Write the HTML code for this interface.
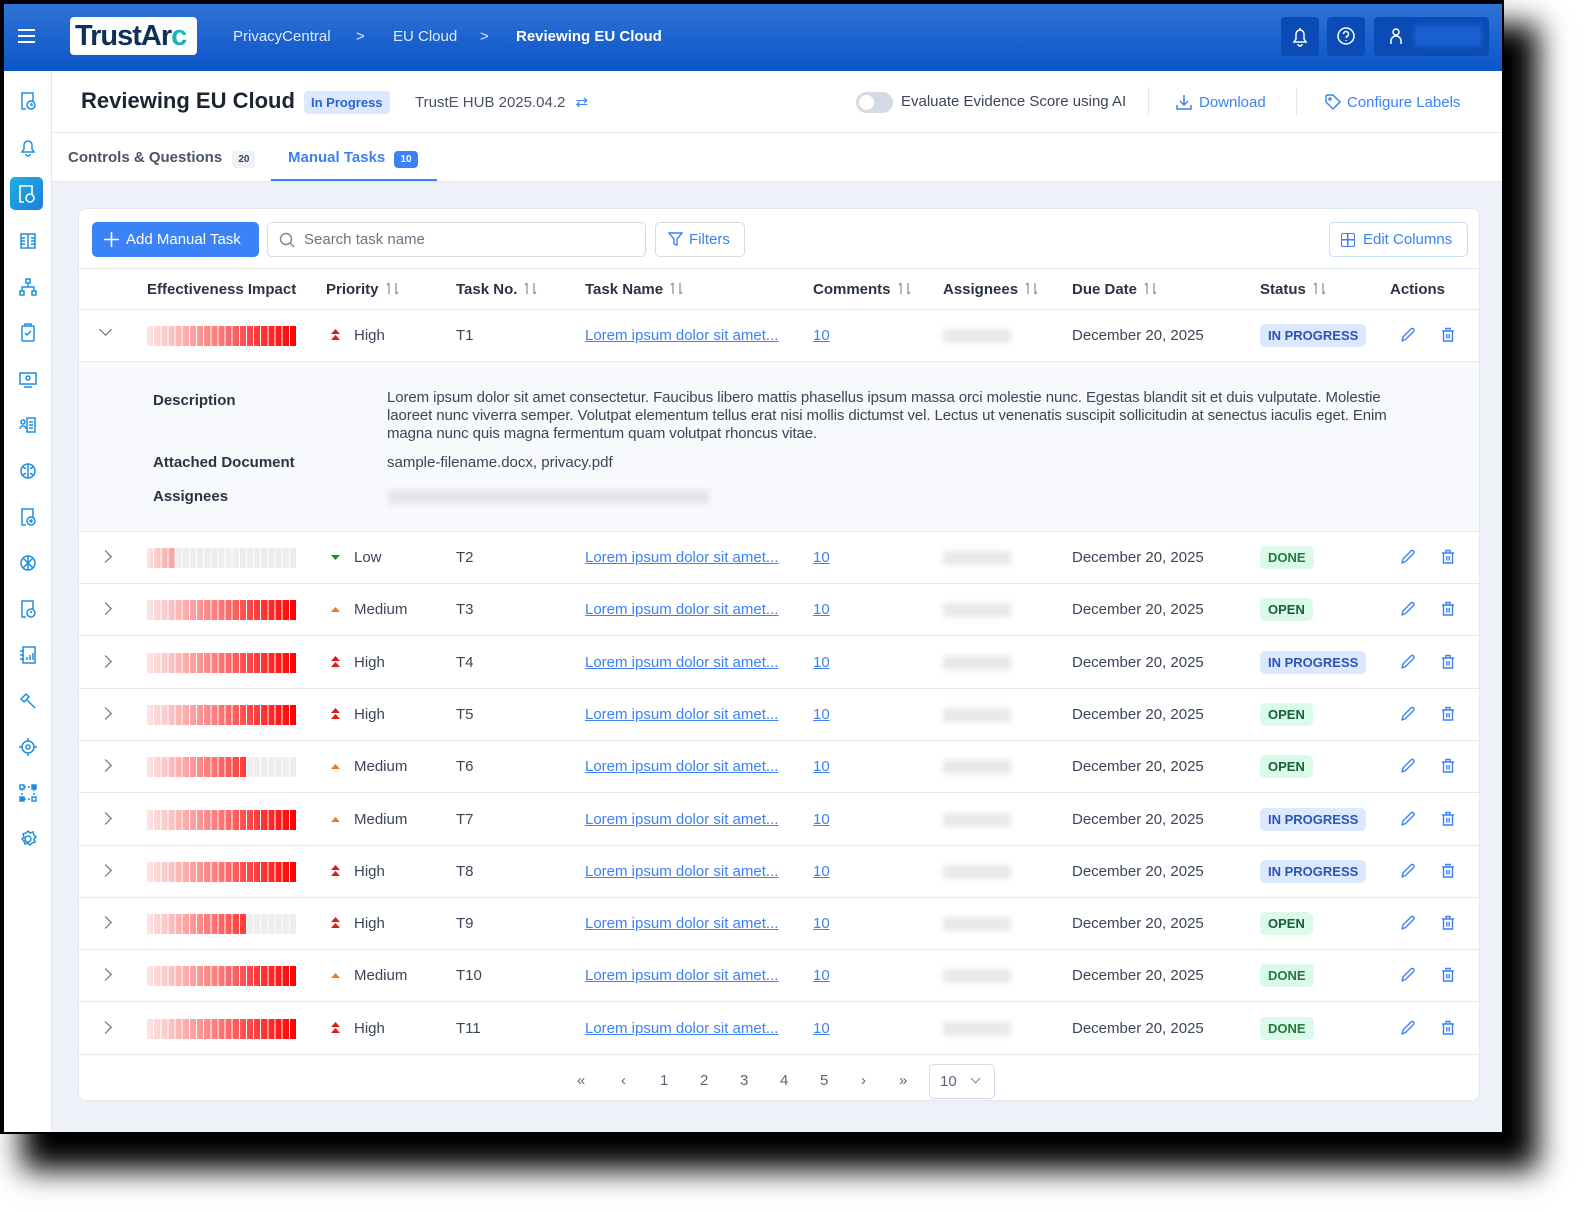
<!DOCTYPE html>
<html><head><meta charset="utf-8"><style>
*{box-sizing:border-box;margin:0;padding:0}
body{width:1588px;height:1212px;background:#fff;font-family:"Liberation Sans",sans-serif;position:relative;overflow:hidden;color:#3b4559}
.blk{position:absolute;left:0;top:0;width:1504px;height:1134px;background:#000;box-shadow:28px 30px 28px 6px #000}
.fr{position:absolute;left:4px;top:4px;width:1498px;height:1128px;background:#eef2f8;overflow:hidden}
.hdr{position:absolute;left:0;top:0;width:1498px;height:67px;background:linear-gradient(180deg,#2f73d6,#0c55c8)}
.hdr .t{position:absolute;color:#dfe9fb;font-size:15px;top:24px}
.logo{position:absolute;left:66px;top:13px;width:127px;height:38px;background:#fff;border-radius:4px;font-size:29px;font-weight:bold;color:#0e3157;line-height:38px;padding-left:5px;letter-spacing:-1px}
.hb{position:absolute;top:13px;height:39px;background:#0a4bb5;border-radius:4px}
.side{position:absolute;left:0;top:67px;width:48px;height:1061px;background:#fff;border-right:1px solid #e3e8ef}
.side>svg{position:absolute;left:14px}
.title{position:absolute;left:48px;top:67px;width:1450px;height:62px;background:#fff;border-bottom:1px solid #e3e8ef}
.tabs{position:absolute;left:48px;top:129px;width:1450px;height:49px;background:#fff;border-bottom:1px solid #e3e8ef}
.card{position:absolute;left:74px;top:204px;width:1402px;height:893px;background:#fff;border-radius:8px;border:1px solid #e3e8ef}
.row{position:absolute;left:0;width:1400px;height:52px;border-bottom:1px solid #e6ebf2;font-size:15px}
.row>*{position:absolute;top:17px}
.bar{left:68px!important;top:16px!important;width:150px;height:20px}
.full{background:repeating-linear-gradient(90deg,transparent 0 6.14px,#fff 6.14px 7.14px),linear-gradient(90deg,#fde6e6,#ff0000)}
.part{background:repeating-linear-gradient(90deg,transparent 0 6.14px,#fff 6.14px 7.14px),linear-gradient(90deg,#fde6e6,#ff3838 100px,#eeeeee 100px)}
.low{background:repeating-linear-gradient(90deg,transparent 0 6.14px,#fff 6.14px 7.14px),linear-gradient(90deg,#fde6e6,#f89c9c 28.5px,#eeeeee 28.5px)}
.chev{left:22px;top:20px!important;width:9px;height:9px;border-right:1.6px solid #5a6577;border-bottom:1.6px solid #5a6577;transform:rotate(-45deg)}
.pi{left:251px;top:18px!important}
.pt{left:275px}.tn{left:377px}
.nm{left:506px;color:#3b82f6;text-decoration:underline}
.cm{left:734px;color:#3b82f6;text-decoration:underline}
.as{left:864px;top:19px!important;width:68px;height:14px;background:#e8e8e8;filter:blur(3px)}
.dd{left:993px}
.st{left:1181px;top:14px!important;font-size:13px;font-weight:bold;padding:4px 8px;border-radius:5px}
.ip{background:#dbe8fd;color:#2d55b8}.op{background:#dcfaea;color:#16603a}.dn{background:#dcfaea;color:#237a3c}
.ed{left:1320px;top:16px!important}.tr{left:1361px;top:16px!important}
.th{position:absolute;top:72px;font-size:15px;font-weight:bold;color:#2a3344}
.th svg{vertical-align:-2px;margin-left:7px}
</style></head><body>
<svg width="0" height="0" style="position:absolute"><defs>
<g id="hi"><path d="M1 6L5.5 1 10 6zM1 12L5.5 7 10 12z" fill="#e01919"/></g>
<g id="md"><path d="M1 10L5.5 5 10 10z" fill="#f07a1a"/></g>
<g id="lo"><path d="M1 5L5.5 10 10 5z" fill="#2a8a2a"/></g>
<g id="pen"><path d="M3 15l1-4 8-8a1.5 1.5 0 0 1 2.5 2.5l-8 8z" fill="none" stroke="#3b82f6" stroke-width="1.4" stroke-linejoin="round"/></g>
<g id="bin"><path d="M2 5h12M6 5V2.5h4V5M3.5 5v10h9V5M6.8 8v4.5M9.2 8v4.5" fill="none" stroke="#3b82f6" stroke-width="1.4"/></g>
<g id="srt"><path d="M3 13V2M1 4l2-2M10 2v11M12 11l-2 2" fill="none" stroke="#8a95a8" stroke-width="1.3"/></g>
</defs></svg>
<div class="blk"></div>
<div class="fr">
<div class="hdr">
<div style="position:absolute;left:14px;top:25px;width:17px;height:2px;background:#fff;box-shadow:0 6px 0 #fff,0 12px 0 #fff"></div>
<div class="logo">TrustAr<span style="color:#1ab3b8">c</span></div>
<div class="t" style="left:229px">PrivacyCentral</div>
<div class="t" style="left:352px">&gt;</div>
<div class="t" style="left:389px">EU Cloud</div>
<div class="t" style="left:476px">&gt;</div>
<div class="t" style="left:512px;color:#fff;font-weight:bold">Reviewing EU Cloud</div>
<div class="hb" style="left:1277px;width:38px"><svg width="38" height="39" viewBox="0 0 38 39"><path d="M13 25h12l-2-3v-5a4 4 0 0 0-8 0v5zM17 27a2 2 0 0 0 4 0M19 11v2" fill="none" stroke="#fff" stroke-width="1.5"/></svg></div>
<div class="hb" style="left:1323px;width:38px"><svg width="38" height="39" viewBox="0 0 38 39"><circle cx="19" cy="19" r="8" fill="none" stroke="#fff" stroke-width="1.5"/><path d="M16.5 17a2.5 2.5 0 1 1 3 2.5v1.5M19 23v1" fill="none" stroke="#fff" stroke-width="1.5"/></svg></div>
<div class="hb" style="left:1370px;width:115px"><svg width="38" height="39" viewBox="0 0 38 39"><circle cx="22" cy="15" r="3" fill="none" stroke="#fff" stroke-width="1.5"/><path d="M17 27v-3a5 5 0 0 1 10 0v3" fill="none" stroke="#fff" stroke-width="1.5"/></svg><div style="position:absolute;left:40px;top:8px;width:68px;height:22px;background:#1a5fd0;filter:blur(2px)"></div></div>
</div>
<div class="side">
<svg style="top:20px" width="20" height="20" viewBox="0 0 20 20" fill="none" stroke="#1e8fe0" stroke-width="1.5"><path d="M8 18H4V2h11v8"/><circle cx="13" cy="14" r="4"/><path d="M13 12v2h2"/></svg>
<svg style="top:66px" width="20" height="20" viewBox="0 0 20 20" fill="none" stroke="#1e8fe0" stroke-width="1.5"><path d="M4 15h12l-2-3V8a4 4 0 0 0-8 0v4zM8 17a2 2 0 0 0 4 0"/></svg>
<div style="position:absolute;left:6px;top:106px;width:33px;height:33px;border-radius:5px;background:linear-gradient(135deg,#1fb0e0,#1a7ee0)"><svg style="position:absolute;left:0;top:0" width="33" height="33" viewBox="0 0 33 33" fill="none" stroke="#fff" stroke-width="1.6"><path d="M14 25h-4V9h12v8"/><circle cx="20" cy="21" r="4"/></svg></div>
<svg style="top:160px" width="20" height="20" viewBox="0 0 20 20" fill="none" stroke="#1e8fe0" stroke-width="1.5"><rect x="3" y="3" width="14" height="14"/><path d="M10 3v14M3 7h4M3 10h4M3 13h4M13 7h4M13 10h4M13 13h4"/></svg>
<svg style="top:206px" width="20" height="20" viewBox="0 0 20 20" fill="none" stroke="#1e8fe0" stroke-width="1.5"><rect x="8" y="2" width="4" height="4"/><rect x="2" y="14" width="4" height="4"/><rect x="14" y="14" width="4" height="4"/><path d="M10 6v4M4 14v-4h12v4"/></svg>
<svg style="top:252px" width="20" height="20" viewBox="0 0 20 20" fill="none" stroke="#1e8fe0" stroke-width="1.5"><rect x="4" y="3" width="12" height="15" rx="1"/><path d="M7 3V1h6v2M7 10l2 2 4-4"/></svg>
<svg style="top:298px" width="20" height="20" viewBox="0 0 20 20" fill="none" stroke="#1e8fe0" stroke-width="1.5"><rect x="2" y="4" width="16" height="11"/><path d="M6 18h8"/><circle cx="10" cy="9" r="2"/></svg>
<svg style="top:344px" width="20" height="20" viewBox="0 0 20 20" fill="none" stroke="#1e8fe0" stroke-width="1.5"><rect x="9" y="3" width="8" height="14"/><path d="M11 7h4M11 10h4M11 13h4"/><circle cx="5" cy="7" r="2"/><path d="M2 14a3 3 0 0 1 6 0"/></svg>
<svg style="top:390px" width="20" height="20" viewBox="0 0 20 20" fill="none" stroke="#1e8fe0" stroke-width="1.5"><circle cx="10" cy="10" r="7"/><path d="M10 3v14M5 6l3 2M15 6l-3 2M5 14l3-2M15 14l-3-2"/></svg>
<svg style="top:436px" width="20" height="20" viewBox="0 0 20 20" fill="none" stroke="#1e8fe0" stroke-width="1.5"><path d="M8 18H4V2h11v8"/><circle cx="13" cy="14" r="4"/><circle cx="13" cy="14" r="1"/></svg>
<svg style="top:482px" width="20" height="20" viewBox="0 0 20 20" fill="none" stroke="#1e8fe0" stroke-width="1.5"><circle cx="10" cy="10" r="7"/><path d="M5 5l10 10M15 5L5 15M10 3v14"/></svg>
<svg style="top:528px" width="20" height="20" viewBox="0 0 20 20" fill="none" stroke="#1e8fe0" stroke-width="1.5"><path d="M8 18H4V2h11v8"/><circle cx="13" cy="14" r="4"/><path d="M13 12v2"/></svg>
<svg style="top:574px" width="20" height="20" viewBox="0 0 20 20" fill="none" stroke="#1e8fe0" stroke-width="1.5"><rect x="5" y="2" width="12" height="16"/><path d="M2 6h4M2 10h4M2 14h4M9 15v-3M12 15v-5M15 15V8"/></svg>
<svg style="top:620px" width="20" height="20" viewBox="0 0 20 20" fill="none" stroke="#1e8fe0" stroke-width="1.5"><path d="M3 8l5-5 3 3-5 5zM9 9l8 8"/></svg>
<svg style="top:666px" width="20" height="20" viewBox="0 0 20 20" fill="none" stroke="#1e8fe0" stroke-width="1.5"><circle cx="10" cy="10" r="6"/><circle cx="10" cy="10" r="2"/><path d="M10 1v3M10 16v3M1 10h3M16 10h3"/></svg>
<svg style="top:712px" width="20" height="20" viewBox="0 0 20 20" fill="none" stroke="#1e8fe0" stroke-width="1.5"><rect x="2" y="2" width="4" height="4"/><rect x="14" y="2" width="4" height="4" fill="#1e8fe0"/><rect x="2" y="14" width="4" height="4" fill="#1e8fe0"/><rect x="14" y="14" width="4" height="4"/><path d="M6 4h8M6 16h8M4 6v8M16 6v8" stroke-dasharray="2 2"/></svg>
<svg style="top:758px" width="20" height="20" viewBox="0 0 20 20" fill="none" stroke="#1e8fe0" stroke-width="1.5"><circle cx="10" cy="10" r="3"/><path d="M10 2l2 2 3-1 1 3 2 2-2 2 1 3-3 1-2 2-2-2-3 1-1-3-2-2 2-2-1-3 3-1z"/></svg>
</div>
<div class="title">
<div style="position:absolute;left:29px;top:17px;font-size:22px;font-weight:bold;color:#1d2433">Reviewing EU Cloud</div>
<div style="position:absolute;left:252px;top:20px;background:#dbe8fd;color:#2d62d0;font-size:13px;font-weight:bold;padding:4px 7px;border-radius:4px">In Progress</div>
<div style="position:absolute;left:363px;top:22px;font-size:15px;color:#4a5466">TrustE HUB 2025.04.2 <span style="color:#3b82f6;margin-left:6px">⇄</span></div>
<div style="position:absolute;left:804px;top:21px;width:37px;height:21px;border-radius:11px;background:#d5dbe4"><div style="position:absolute;left:3px;top:3px;width:15px;height:15px;border-radius:50%;background:#fff"></div></div>
<div style="position:absolute;left:849px;top:22px;font-size:15px;color:#3b4559">Evaluate Evidence Score using AI</div>
<div style="position:absolute;left:1096px;top:16px;width:1px;height:28px;background:#e3e8ef"></div>
<svg style="position:absolute;left:1123px;top:22px" width="18" height="18" viewBox="0 0 18 18" fill="none" stroke="#3b82f6" stroke-width="1.5"><path d="M9 2v10M5 8l4 4 4-4M2 12v4h14v-4"/></svg>
<div style="position:absolute;left:1147px;top:23px;font-size:15px;color:#3b82f6">Download</div>
<div style="position:absolute;left:1244px;top:16px;width:1px;height:28px;background:#e3e8ef"></div>
<svg style="position:absolute;left:1272px;top:22px" width="18" height="18" viewBox="0 0 18 18" fill="none" stroke="#3b82f6" stroke-width="1.5"><path d="M2 3v6l7 7 7-7-7-7H3z"/><circle cx="6" cy="6" r="1"/></svg>
<div style="position:absolute;left:1295px;top:23px;font-size:15px;color:#3b82f6">Configure Labels</div>
</div>
<div class="tabs">
<div style="position:absolute;left:16px;top:16px;font-size:15px;font-weight:bold;color:#4a5466">Controls &amp; Questions <span style="font-size:10px;background:#eef1f5;padding:3px 6px;border-radius:4px;margin-left:6px;color:#3b4559">20</span></div>
<div style="position:absolute;left:236px;top:16px;font-size:15px;font-weight:bold;color:#3b82f6">Manual Tasks <span style="font-size:10px;background:#3b82f6;color:#fff;padding:3px 6px;border-radius:4px;margin-left:5px">10</span></div>
<div style="position:absolute;left:219px;top:46px;width:166px;height:2px;background:#3b82f6"></div>
</div>
<div class="card">
<div style="position:absolute;left:13px;top:13px;width:167px;height:35px;background:#3b82f6;border-radius:5px;color:#fff;font-size:15px;line-height:35px;padding-left:34px">Add Manual Task<svg style="position:absolute;left:12px;top:10px" width="15" height="15" viewBox="0 0 15 15" stroke="#fff" stroke-width="1.6"><path d="M7.5 0v15M0 7.5h15"/></svg></div>
<div style="position:absolute;left:188px;top:13px;width:379px;height:35px;border:1px solid #d5dbe4;border-radius:5px;font-size:15px;color:#6b7585;line-height:33px;padding-left:36px">Search task name<svg style="position:absolute;left:11px;top:9px" width="16" height="16" viewBox="0 0 16 16" fill="none" stroke="#7a8496" stroke-width="1.4"><circle cx="7" cy="7" r="5.5"/><path d="M11 11l4 4"/></svg></div>
<div style="position:absolute;left:576px;top:13px;width:90px;height:35px;border:1px solid #d5dbe4;border-radius:5px;font-size:15px;color:#3b82f6;line-height:33px;padding-left:33px">Filters<svg style="position:absolute;left:12px;top:9px" width="15" height="15" viewBox="0 0 15 15" fill="none" stroke="#3b82f6" stroke-width="1.4"><path d="M1 1h13L9 7v6l-3-1V7z"/></svg></div>
<div style="position:absolute;left:1250px;top:13px;width:139px;height:35px;border:1px solid #c9dcfb;border-radius:5px;font-size:15px;color:#3b82f6;line-height:33px;padding-left:33px">Edit Columns<span style="position:absolute;left:11px;top:10px;width:14px;height:14px;border:1.5px solid #3b82f6;border-radius:2px;background:linear-gradient(#3b82f6,#3b82f6) 5px 0/1.5px 100% no-repeat,linear-gradient(#3b82f6,#3b82f6) 0 5px/100% 1.5px no-repeat"></span></div>
<div style="position:absolute;left:0;top:59px;width:1400px;height:1px;background:#e6ebf2"></div>
<div class="th" style="left:68px">Effectiveness Impact</div>
<div class="th" style="left:247px">Priority<svg width="14" height="15"><use href="#srt"/></svg></div>
<div class="th" style="left:377px">Task No.<svg width="14" height="15"><use href="#srt"/></svg></div>
<div class="th" style="left:506px">Task Name<svg width="14" height="15"><use href="#srt"/></svg></div>
<div class="th" style="left:734px">Comments<svg width="14" height="15"><use href="#srt"/></svg></div>
<div class="th" style="left:864px">Assignees<svg width="14" height="15"><use href="#srt"/></svg></div>
<div class="th" style="left:993px">Due Date<svg width="14" height="15"><use href="#srt"/></svg></div>
<div class="th" style="left:1181px">Status<svg width="14" height="15"><use href="#srt"/></svg></div>
<div class="th" style="left:1311px">Actions</div>
<div style="position:absolute;left:0;top:100px;width:1400px;height:1px;background:#e6ebf2"></div>

<div class="row" style="top:101px"><div class="chev" style="transform:rotate(45deg);top:15px!important"></div><div class="bar full"></div><svg class="pi" width="12" height="13"><use href="#hi"/></svg><div class="pt">High</div><div class="tn">T1</div><div class="nm">Lorem ipsum dolor sit amet...</div><div class="cm">10</div><div class="as"></div><div class="dd">December 20, 2025</div><div class="st ip">IN PROGRESS</div><svg class="ed" width="18" height="18"><use href="#pen"/></svg><svg class="tr" width="16" height="18"><use href="#bin"/></svg></div>
<div style="position:absolute;left:0;top:153px;width:1400px;height:170px;background:#f7f9fc;border-bottom:1px solid #e6ebf2;font-size:15px">
<div style="position:absolute;left:74px;top:30px;font-weight:bold;color:#2a3344">Description</div>
<div style="position:absolute;left:308px;top:27px;width:1020px;line-height:18px;color:#3b4559;font-size:15px;letter-spacing:-0.1px">Lorem ipsum dolor sit amet consectetur. Faucibus libero mattis phasellus ipsum massa orci molestie nunc. Egestas blandit sit et duis vulputate. Molestie laoreet nunc viverra semper. Volutpat elementum tellus erat nisi mollis dictumst vel. Lectus ut venenatis suscipit sollicitudin at senectus iaculis eget. Enim magna nunc quis magna fermentum quam volutpat rhoncus vitae.</div>
<div style="position:absolute;left:74px;top:92px;font-weight:bold;color:#2a3344">Attached Document</div>
<div style="position:absolute;left:308px;top:92px">sample-filename.docx, privacy.pdf</div>
<div style="position:absolute;left:74px;top:126px;font-weight:bold;color:#2a3344">Assignees</div>
<div style="position:absolute;left:310px;top:128px;width:320px;height:14px;background:#e2e4e8;filter:blur(3px)"></div>
</div>

<div class="row" style="top:323px"><div class="chev"></div><div class="bar low"></div><svg class="pi" width="12" height="13"><use href="#lo"/></svg><div class="pt">Low</div><div class="tn">T2</div><div class="nm">Lorem ipsum dolor sit amet...</div><div class="cm">10</div><div class="as"></div><div class="dd">December 20, 2025</div><div class="st dn">DONE</div><svg class="ed" width="18" height="18"><use href="#pen"/></svg><svg class="tr" width="16" height="18"><use href="#bin"/></svg></div>
<div class="row" style="top:375.3px"><div class="chev"></div><div class="bar full"></div><svg class="pi" width="12" height="13"><use href="#md"/></svg><div class="pt">Medium</div><div class="tn">T3</div><div class="nm">Lorem ipsum dolor sit amet...</div><div class="cm">10</div><div class="as"></div><div class="dd">December 20, 2025</div><div class="st op">OPEN</div><svg class="ed" width="18" height="18"><use href="#pen"/></svg><svg class="tr" width="16" height="18"><use href="#bin"/></svg></div>
<div class="row" style="top:427.6px"><div class="chev"></div><div class="bar full"></div><svg class="pi" width="12" height="13"><use href="#hi"/></svg><div class="pt">High</div><div class="tn">T4</div><div class="nm">Lorem ipsum dolor sit amet...</div><div class="cm">10</div><div class="as"></div><div class="dd">December 20, 2025</div><div class="st ip">IN PROGRESS</div><svg class="ed" width="18" height="18"><use href="#pen"/></svg><svg class="tr" width="16" height="18"><use href="#bin"/></svg></div>
<div class="row" style="top:479.9px"><div class="chev"></div><div class="bar full"></div><svg class="pi" width="12" height="13"><use href="#hi"/></svg><div class="pt">High</div><div class="tn">T5</div><div class="nm">Lorem ipsum dolor sit amet...</div><div class="cm">10</div><div class="as"></div><div class="dd">December 20, 2025</div><div class="st op">OPEN</div><svg class="ed" width="18" height="18"><use href="#pen"/></svg><svg class="tr" width="16" height="18"><use href="#bin"/></svg></div>
<div class="row" style="top:532.2px"><div class="chev"></div><div class="bar part"></div><svg class="pi" width="12" height="13"><use href="#md"/></svg><div class="pt">Medium</div><div class="tn">T6</div><div class="nm">Lorem ipsum dolor sit amet...</div><div class="cm">10</div><div class="as"></div><div class="dd">December 20, 2025</div><div class="st op">OPEN</div><svg class="ed" width="18" height="18"><use href="#pen"/></svg><svg class="tr" width="16" height="18"><use href="#bin"/></svg></div>
<div class="row" style="top:584.5px"><div class="chev"></div><div class="bar full"></div><svg class="pi" width="12" height="13"><use href="#md"/></svg><div class="pt">Medium</div><div class="tn">T7</div><div class="nm">Lorem ipsum dolor sit amet...</div><div class="cm">10</div><div class="as"></div><div class="dd">December 20, 2025</div><div class="st ip">IN PROGRESS</div><svg class="ed" width="18" height="18"><use href="#pen"/></svg><svg class="tr" width="16" height="18"><use href="#bin"/></svg></div>
<div class="row" style="top:636.8px"><div class="chev"></div><div class="bar full"></div><svg class="pi" width="12" height="13"><use href="#hi"/></svg><div class="pt">High</div><div class="tn">T8</div><div class="nm">Lorem ipsum dolor sit amet...</div><div class="cm">10</div><div class="as"></div><div class="dd">December 20, 2025</div><div class="st ip">IN PROGRESS</div><svg class="ed" width="18" height="18"><use href="#pen"/></svg><svg class="tr" width="16" height="18"><use href="#bin"/></svg></div>
<div class="row" style="top:689.1px"><div class="chev"></div><div class="bar part"></div><svg class="pi" width="12" height="13"><use href="#hi"/></svg><div class="pt">High</div><div class="tn">T9</div><div class="nm">Lorem ipsum dolor sit amet...</div><div class="cm">10</div><div class="as"></div><div class="dd">December 20, 2025</div><div class="st op">OPEN</div><svg class="ed" width="18" height="18"><use href="#pen"/></svg><svg class="tr" width="16" height="18"><use href="#bin"/></svg></div>
<div class="row" style="top:741.4px"><div class="chev"></div><div class="bar full"></div><svg class="pi" width="12" height="13"><use href="#md"/></svg><div class="pt">Medium</div><div class="tn">T10</div><div class="nm">Lorem ipsum dolor sit amet...</div><div class="cm">10</div><div class="as"></div><div class="dd">December 20, 2025</div><div class="st dn">DONE</div><svg class="ed" width="18" height="18"><use href="#pen"/></svg><svg class="tr" width="16" height="18"><use href="#bin"/></svg></div>
<div class="row" style="top:793.7px"><div class="chev"></div><div class="bar full"></div><svg class="pi" width="12" height="13"><use href="#hi"/></svg><div class="pt">High</div><div class="tn">T11</div><div class="nm">Lorem ipsum dolor sit amet...</div><div class="cm">10</div><div class="as"></div><div class="dd">December 20, 2025</div><div class="st dn">DONE</div><svg class="ed" width="18" height="18"><use href="#pen"/></svg><svg class="tr" width="16" height="18"><use href="#bin"/></svg></div>

<div style="position:absolute;left:0;top:863px;width:1400px;font-size:15px;color:#5a6577">
<span style="position:absolute;left:498px">«</span><span style="position:absolute;left:542px">‹</span>
<span style="position:absolute;left:581px">1</span><span style="position:absolute;left:621px">2</span><span style="position:absolute;left:661px">3</span><span style="position:absolute;left:701px">4</span><span style="position:absolute;left:741px">5</span>
<span style="position:absolute;left:782px">›</span><span style="position:absolute;left:820px">»</span>
</div>
<div style="position:absolute;left:850px;top:855px;width:66px;height:35px;border:1px solid #d5dbe4;border-radius:5px;font-size:15px;color:#5a6577;line-height:33px;padding-left:10px">10 <span style="position:absolute;left:42px;top:10px;width:7px;height:7px;border-right:1.5px solid #7a8496;border-bottom:1.5px solid #7a8496;transform:rotate(45deg)"></span></div>
</div>
</div>
</body></html>
